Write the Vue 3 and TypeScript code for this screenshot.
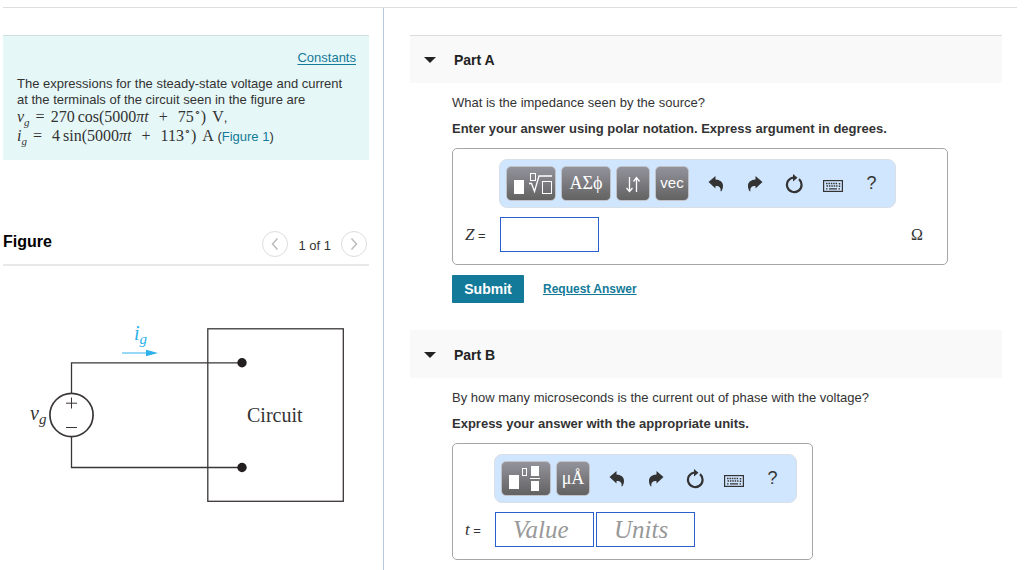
<script setup lang="ts">
import { ref } from 'vue'

interface Tool {
  name: string
  label: string
}

const tools: Tool[] = [
  { name: 'undo', label: 'Undo' },
  { name: 'redo', label: 'Redo' },
  { name: 'reset', label: 'Reset' },
  { name: 'keyboard', label: 'Keyboard shortcuts' },
  { name: 'help', label: 'Help' },
]

const openA = ref(true)
const openB = ref(true)
const impedance = ref('')
const timeValue = ref('')
const timeUnits = ref('')
</script>

<template>
  <svg class="sprites" width="0" height="0" aria-hidden="true">
    <symbol id="tool-undo" viewBox="0 0 20 20">
      <path d="M2.500 8 9.500 2v3.500c4.500.300 7.500 2.500 7.500 6.500 0 2-.6 3.800-1.600 5.200h-.9c.7-3.200-.8-5.200-5-5.200V14.500z" fill="#333" />
    </symbol>
    <symbol id="tool-redo" viewBox="0 0 20 20">
      <path d="M17.500 8 10.500 2v3.500C6 5.800 3 8 3 12c0 2 .6 3.800 1.600 5.200h.9C4.800 14 6.300 12 10.500 12V14.500z" fill="#333" />
    </symbol>
    <symbol id="tool-reset" viewBox="0 0 20 20">
      <path d="M15 5.200A7.300 7.300 0 1 1 9.500 3.500" fill="none" stroke="#333" stroke-width="2.200" />
      <path d="M9 0 13.500 3.700 9 7.500z" fill="#333" />
    </symbol>
    <symbol id="tool-keyboard" viewBox="0 0 20 20">
      <rect x=".6" y="6.600" width="18.800" height="10.800" fill="none" stroke="#333" stroke-width="1.200" />
      <path d="M3 9.500h12M3.500 12h11M16.500 9v4" stroke="#333" stroke-width="1.500" stroke-dasharray="1.500 .9" />
      <path d="M3 14.800h1.500M6 14.800h8M15.500 14.800H17" stroke="#333" stroke-width="1.300" />
    </symbol>
  </svg>

  <div class="page">
    <aside class="side">
      <section class="intro">
        <a class="constants" href="#constants">Constants</a>
        <p class="statement">
          The expressions for the steady-state voltage and current<br />
          at the terminals of the circuit seen in the figure are
        </p>
        <p class="formula">
          <span class="math"><i>v</i><sub>g</sub><span class="rel">=</span>270<span class="fn">cos</span>(5000<i>πt</i><span class="op">+</span>75<sup>∘</sup>)<span class="unit">V</span></span>,
        </p>
        <p class="formula">
          <span class="math"><i>i</i><sub>g</sub><span class="rel wide">=</span>4<span class="fn">sin</span>(5000<i>πt</i><span class="op">+</span>113<sup>∘</sup>)<span class="unit">A</span></span>
          (<a href="#figure">Figure 1</a>)
        </p>
      </section>

      <section id="figure" class="figure">
        <header class="figure-head">
          <h2>Figure</h2>
          <nav class="pager" aria-label="Figures">
            <button type="button" aria-label="Previous figure">
              <svg viewBox="0 0 10 14" width="10" height="14"><path d="M7.500 1.500 2.500 7l5 5.500" /></svg>
            </button>
            <span>1 of 1</span>
            <button type="button" aria-label="Next figure">
              <svg viewBox="0 0 10 14" width="10" height="14"><path d="M2.500 1.500 7.500 7l-5 5.500" /></svg>
            </button>
          </nav>
        </header>
        <svg class="circuit" viewBox="0 0 366 200" role="img" aria-label="Voltage source connected to a circuit">
          <g fill="none" stroke="#3a3637" stroke-width="1.300">
            <rect x="204.800" y="18.800" width="135.500" height="172.500" />
            <path d="M239 52.800H68.500V83M68.500 126V157.500H239" />
            <circle cx="68.500" cy="105" r="21.600" stroke-width="1.700" />
            <path d="M63 93.200h11M68.500 87.500v11M63 117.500h11" stroke-width="1" />
          </g>
          <circle cx="239" cy="52.800" r="4.700" fill="#231f20" />
          <circle cx="239" cy="157.500" r="4.700" fill="#231f20" />
          <path d="M119 43h26" stroke="#2cb1ec" stroke-width="1" />
          <path d="M143 39.800 155 43l-12 3.200z" fill="#2cb1ec" />
          <text x="131" y="30" class="sym blue">i<tspan dy="4" font-size="15">g</tspan></text>
          <text x="27" y="110" class="sym">v<tspan dy="4" font-size="15">g</tspan></text>
          <text x="244" y="112" class="name">Circuit</text>
        </svg>
      </section>
    </aside>

    <main class="parts">
      <section class="part first">
        <h2 class="part-head">
          <button type="button" :aria-expanded="openA" @click="openA = !openA"><span class="caret"></span>Part A</button>
        </h2>
        <div v-if="openA" class="part-body">
          <p class="question">What is the impedance seen by the source?</p>
          <p class="instruction">Enter your answer using polar notation. Express argument in degrees.</p>
          <div class="answer answer-a">
            <div class="toolbar">
              <button class="key wide" type="button" aria-label="Templates">
                <svg viewBox="0 0 48 32" width="48" height="32">
                  <rect x="7" y="12" width="10" height="14" fill="#fff" />
                  <g fill="none" stroke="#fff">
                    <rect x="23.500" y="5.500" width="5" height="7" />
                    <path d="M22 15.500h2.500l3 8L32 8h13" stroke-width="1.300" />
                    <rect x="35.500" y="13.500" width="9" height="12" />
                  </g>
                </svg>
              </button>
              <button class="key wide greek" type="button">ΑΣϕ</button>
              <button class="key" type="button" aria-label="Arrows">
                <svg viewBox="0 0 32 32" width="32" height="32" fill="none" stroke="#fff" stroke-width="1.300">
                  <path d="M12.500 9v14M9.500 20l3 3.500 3-3.500M19.500 24V10M16.500 13.500l3-4 3 4" />
                </svg>
              </button>
              <button class="key vec" type="button">vec</button>
              <div class="tools">
                <button v-for="t in tools" :key="t.name" type="button" :aria-label="t.label">
                  <span v-if="t.name === 'help'" class="help">?</span>
                  <svg v-else width="20" height="20"><use :href="'#tool-' + t.name" /></svg>
                </button>
              </div>
            </div>
            <label for="impedance"><i>Z</i> =</label>
            <div class="fields"><input id="impedance" v-model="impedance" type="text" /></div>
            <span class="ohm">Ω</span>
          </div>
          <div class="actions">
            <button class="submit" type="button">Submit</button>
            <a href="#answer">Request Answer</a>
          </div>
        </div>
      </section>

      <section class="part">
        <h2 class="part-head">
          <button type="button" :aria-expanded="openB" @click="openB = !openB"><span class="caret"></span>Part B</button>
        </h2>
        <div v-if="openB" class="part-body">
          <p class="question">By how many microseconds is the current out of phase with the voltage?</p>
          <p class="instruction">Express your answer with the appropriate units.</p>
          <div class="answer answer-b">
            <div class="toolbar">
              <button class="key wide" type="button" aria-label="Templates">
                <svg viewBox="0 0 48 32" width="48" height="32">
                  <g fill="#fff">
                    <rect x="7" y="12" width="10" height="14" />
                    <rect x="29" y="3" width="8" height="10" />
                    <rect x="28" y="15" width="10" height="1" />
                    <rect x="29" y="18" width="8" height="10" />
                  </g>
                  <rect x="20.500" y="5.500" width="4" height="7" fill="none" stroke="#fff" />
                </svg>
              </button>
              <button class="key greek" type="button">μÅ</button>
              <div class="tools">
                <button v-for="t in tools" :key="t.name" type="button" :aria-label="t.label">
                  <span v-if="t.name === 'help'" class="help">?</span>
                  <svg v-else width="20" height="20"><use :href="'#tool-' + t.name" /></svg>
                </button>
              </div>
            </div>
            <label for="time-value"><i>t</i> =</label>
            <div class="fields">
              <input id="time-value" v-model="timeValue" type="text" placeholder="Value" />
              <input v-model="timeUnits" type="text" placeholder="Units" aria-label="Units" />
            </div>
          </div>
        </div>
      </section>
    </main>
  </div>
</template>

<style>
body {
  margin: 0;
  background: #fff;
}
</style>

<style scoped>
.sprites {
  position: absolute;
}
.page {
  display: grid;
  grid-template-columns: 381px 1fr;
  min-height: calc(100vh - 8px);
  margin: 7px 7px 0 3px;
  border-top: 1px solid #dcdee0;
  font-family: "Liberation Sans", Arial, sans-serif;
  font-size: 13px;
  color: #333;
}
h2,
p {
  margin: 0;
}
a {
  color: #147a99;
}
button {
  padding: 0;
  border: 0;
  background: none;
  color: inherit;
  font: inherit;
  cursor: pointer;
}
svg {
  display: block;
}
.side {
  padding: 27px 14px 0 0;
  border-right: 1px solid #b8c8dc;
}
.intro {
  display: flex;
  flex-direction: column;
  padding: 13px 13px 15px 14px;
  border-top: 1px solid #cfdedf;
  background: #e6f7f7;
}
.constants {
  align-self: flex-end;
  margin-bottom: 10px;
  line-height: 17px;
  text-underline-offset: 2px;
}
.statement {
  line-height: 16px;
  white-space: nowrap;
}
.formula {
  height: 18px;
  line-height: 18px;
  white-space: nowrap;
}
.formula + .formula {
  padding-top: 1px;
}
.formula a {
  text-decoration: none;
}
.math {
  font-family: "Liberation Serif", "Times New Roman", serif;
  font-size: 16px;
}
.math sub,
.math sup {
  font-size: 11px;
  line-height: 0;
}
.math sub {
  font-style: italic;
}
.rel {
  margin: 0 6px;
}
.rel.wide {
  margin-right: 10px;
}
.fn {
  margin-left: 3px;
}
.op {
  margin: 0 10px;
}
.unit {
  margin-left: 6px;
}
.figure-head {
  display: flex;
  justify-content: space-between;
  margin-top: 71px;
  padding-bottom: 7px;
  border-bottom: 2px solid #e8e8e8;
}
.figure-head h2 {
  font-size: 16px;
  line-height: 22px;
  color: #000;
}
.pager {
  display: flex;
  align-items: center;
  gap: 10px;
  padding-right: 2px;
}
.pager span {
  padding-top: 3px;
}
.pager button {
  display: grid;
  place-items: center;
  box-sizing: border-box;
  width: 26px;
  height: 26px;
  border: 1px solid #ddd;
  border-radius: 50%;
}
.pager path {
  fill: none;
  stroke: #bbb;
  stroke-width: 1.500;
}
.circuit {
  width: 100%;
  margin-top: 44px;
}
.sym,
.name {
  font-family: "Liberation Serif", "Times New Roman", serif;
  font-size: 20px;
  fill: #333;
}
.sym {
  font-style: italic;
}
.sym.blue {
  fill: #2cb1ec;
}
.parts {
  padding: 27px 15px 0 26px;
}
.part {
  margin-bottom: 27px;
}
.part-head {
  border-top: 1px solid #f9f9f9;
  background: #f9f9f9;
  font-size: 14px;
  color: #222;
}
.first .part-head {
  border-top-color: #dadcdc;
}
.part-head button {
  display: flex;
  align-items: center;
  gap: 18px;
  width: 100%;
  height: 47px;
  padding-left: 14px;
}
.caret {
  border: 6px solid transparent;
  border-top-color: #222;
  border-bottom: 0;
}
.part-body {
  padding-left: 42px;
}
.question {
  padding-top: 11px;
  line-height: 17px;
}
.instruction {
  margin-top: 9px;
  font-weight: bold;
  line-height: 17px;
}
.answer {
  display: grid;
  align-items: center;
  row-gap: 9px;
  box-sizing: border-box;
  margin-top: 11px;
  padding: 10px 0 12px 12px;
  border: 1px solid #a6a6a6;
  border-radius: 5px;
}
.answer-a {
  grid-template-columns: 34px auto 1fr;
  max-width: 496px;
}
.answer-b {
  grid-template-columns: 29px auto 1fr;
  max-width: 361px;
}
.toolbar {
  grid-column: 2;
  display: flex;
  align-items: center;
  gap: 5px;
  padding: 6px 4px 6px 6px;
  border: 1px solid #d9dfe6;
  border-radius: 8px;
  background: #d0e6ff;
}
.key {
  display: grid;
  place-items: center;
  box-sizing: border-box;
  width: 34px;
  height: 35px;
  border: 1px solid #c0c2c8;
  border-radius: 5px;
  background: linear-gradient(#93939c, #626262);
  color: #fff;
}
.key.wide {
  width: 50px;
}
.key.greek {
  font-family: "Liberation Serif", "Times New Roman", serif;
  font-size: 18px;
}
.key.vec {
  padding-bottom: 3px;
  font-size: 15px;
}
.tools {
  display: flex;
  margin-left: 2px;
}
.tools button {
  display: grid;
  place-items: center;
  width: 39px;
  height: 34px;
}
.help {
  font-size: 18px;
}
label {
  grid-column: 1;
}
label i {
  font-family: "Liberation Serif", "Times New Roman", serif;
  font-size: 17px;
}
.fields {
  grid-column: 2;
  display: flex;
  gap: 2px;
  padding-left: 1px;
}
input {
  box-sizing: border-box;
  width: 99px;
  height: 35px;
  padding: 0 12px 0 17px;
  border: 1px solid #2b5fcb;
  border-radius: 0;
  background: #fff;
  font-family: "Liberation Serif", "Times New Roman", serif;
  font-size: 25px;
}
input::placeholder {
  color: #999;
  font-style: italic;
  opacity: 1;
}
.ohm {
  padding-left: 15px;
  font-family: "Liberation Serif", "Times New Roman", serif;
  font-size: 16px;
}
.actions {
  display: flex;
  align-items: center;
  gap: 19px;
  margin-top: 10px;
}
.submit {
  width: 72px;
  height: 28px;
  border-radius: 1px;
  background: #147a99;
  color: #fff;
  font-size: 14px;
  font-weight: bold;
}
.actions a {
  font-size: 12px;
  font-weight: bold;
}
</style>
